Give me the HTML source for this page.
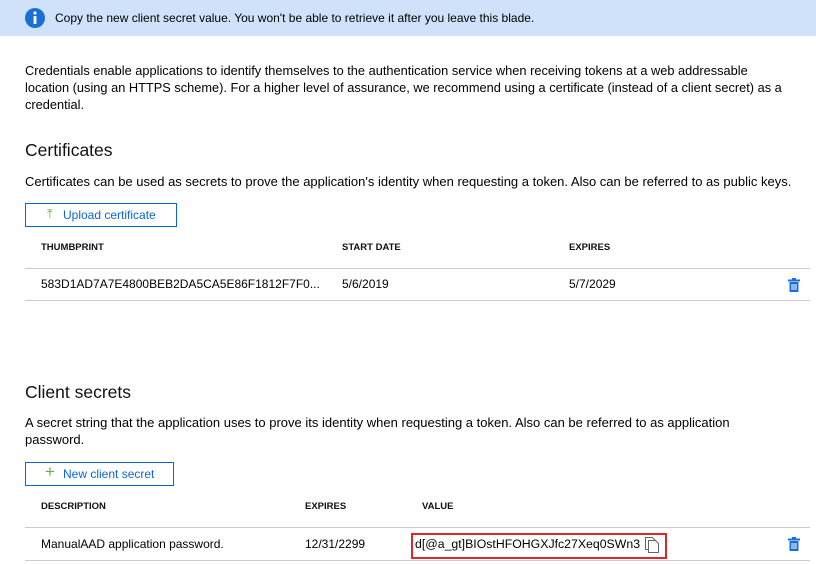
<!DOCTYPE html><html><head><style>
body{margin:0;width:816px;height:564px;overflow:hidden;background:#fff;font-family:"Liberation Sans",sans-serif;font-size:12px;color:#000;position:relative}
.a{position:absolute;white-space:nowrap}
.h{font-size:17.5px;color:#111}
.th{font-size:9.5px;font-weight:bold;color:#111}
.line{position:absolute;left:25px;width:785px;height:1px;background:#ccc}
.btn{position:absolute;border:1px solid #0a66d8;color:#0a66d8;box-sizing:border-box;height:24px;font-size:12px;line-height:22px}
</style></head><body>
<div style="position:absolute;left:0;top:0;width:816px;height:36px;background:#cfe2fa"></div>
<svg class="a" style="left:25px;top:8px" width="20" height="20"><circle cx="10" cy="10" r="10" fill="#1a6fd6"/><rect x="8.6" y="8" width="2.8" height="8" fill="#fff"/><circle cx="10" cy="5" r="1.6" fill="#fff"/></svg>
<div class="a" style="left:55px;top:11px">Copy the new client secret value. You won't be able to retrieve it after you leave this blade.</div>
<div class="a" style="left:25px;top:62px;line-height:17px;white-space:normal;width:775px;font-size:12.8px">Credentials enable applications to identify themselves to the authentication service when receiving tokens at a web addressable <br>location (using an HTTPS scheme). For a higher level of assurance, we recommend using a certificate (instead of a client secret) as a credential.</div>
<div class="a h" style="left:25px;top:140px">Certificates</div>
<div class="a" style="left:25px;top:174px;font-size:13px">Certificates can be used as secrets to prove the application's identity when requesting a token. Also can be referred to as public keys.</div>
<div class="btn" style="left:25px;top:203px;width:152px;padding-left:21px"><span style="position:absolute;left:21px;top:-1px;color:#6bb33a;font-size:13px">⤒</span><span style="margin-left:16px">Upload certificate</span></div>
<div class="a th" style="left:41px;top:242px">THUMBPRINT</div>
<div class="a th" style="left:342px;top:242px">START DATE</div>
<div class="a th" style="left:569px;top:242px">EXPIRES</div>
<div class="line" style="top:268px"></div>
<div class="a" style="left:41px;top:277px">583D1AD7A7E4800BEB2DA5CA5E86F1812F7F0...</div>
<div class="a" style="left:342px;top:277px">5/6/2019</div>
<div class="a" style="left:569px;top:277px">5/7/2029</div>
<svg class="a" style="left:788px;top:278px" width="12" height="14"><rect x="0" y="1.5" width="12" height="2" fill="#1a6fd6"/><rect x="4" y="0" width="4" height="2" fill="#1a6fd6"/><path d="M1.5 4h9v10h-9z" fill="#1a6fd6"/><path d="M4 6v6M6 6v6M8 6v6" stroke="#fff" stroke-width="1"/></svg>
<div class="line" style="top:300px"></div>
<div class="a h" style="left:25px;top:382px">Client secrets</div>
<div class="a" style="left:25px;top:414px;line-height:17px;white-space:normal;width:760px;font-size:13px">A secret string that the application uses to prove its identity when requesting a token. Also can be referred to as application password.</div>
<div class="btn" style="left:25px;top:462px;width:149px"><span style="position:absolute;left:19px;top:-2px;color:#6bb33a;font-size:17px">+</span><span style="margin-left:37px">New client secret</span></div>
<div class="a th" style="left:41px;top:501px">DESCRIPTION</div>
<div class="a th" style="left:305px;top:501px">EXPIRES</div>
<div class="a th" style="left:422px;top:501px">VALUE</div>
<div class="line" style="top:527px"></div>
<div class="a" style="left:41px;top:537px">ManualAAD application password.</div>
<div class="a" style="left:305px;top:537px">12/31/2299</div>
<div style="position:absolute;left:411px;top:533px;width:256px;height:26px;border:2px solid #e0262b;box-sizing:border-box"></div>
<div class="a" style="left:415px;top:537px;font-size:12.3px">d[@a_gt]BIOstHFOHGXJfc27Xeq0SWn3</div>
<svg class="a" style="left:645px;top:537px" width="14" height="16"><path d="M0.5 0.5h7l3 3v9h-10z" fill="#fff" stroke="#666"/><path d="M3.5 3.5h7l3 3v9h-10z" fill="#fff" stroke="#666"/></svg>
<svg class="a" style="left:788px;top:537px" width="12" height="14"><rect x="0" y="1.5" width="12" height="2" fill="#1a6fd6"/><rect x="4" y="0" width="4" height="2" fill="#1a6fd6"/><path d="M1.5 4h9v10h-9z" fill="#1a6fd6"/><path d="M4 6v6M6 6v6M8 6v6" stroke="#fff" stroke-width="1"/></svg>
<div class="line" style="top:560px"></div>
</body></html>
